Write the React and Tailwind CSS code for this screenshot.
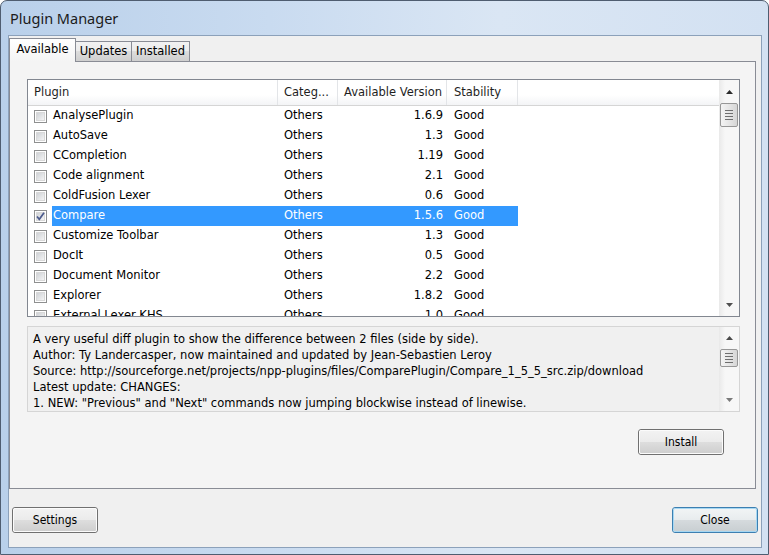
import React from "react";

const rows = [
  ["AnalysePlugin", "1.6.9"],
  ["AutoSave", "1.3"],
  ["CCompletion", "1.19"],
  ["Code alignment", "2.1"],
  ["ColdFusion Lexer", "0.6"],
  ["Compare", "1.5.6"],
  ["Customize Toolbar", "1.3"],
  ["DocIt", "0.5"],
  ["Document Monitor", "2.2"],
  ["Explorer", "1.8.2"],
  ["External Lexer KHS", "1.0"],
];

const FONT = { fontFamily: '"DejaVu Sans", Verdana, sans-serif' };

function Check({ checked }) {
  return (
    <div className="relative w-[13px] h-[13px] shrink-0 border border-[#8e8f8f] bg-white p-[1px]">
      <div className="w-full h-full border border-[#d8d8d8] bg-[linear-gradient(135deg,#cfd2d6,#f4f4f4)]" />
      {checked && (
        <svg className="absolute left-0 top-0" width="11" height="11" viewBox="0 0 11 11">
          <path d="M2 5.5 L4.3 8.3 L9 1.8" stroke="#4b5a8c" strokeWidth="1.7" fill="none" />
        </svg>
      )}
    </div>
  );
}

function Arrow({ up, color }) {
  return (
    <svg width="7" height="4" viewBox="0 0 7 4">
      {up ? <polygon points="3.5,0 7,4 0,4" fill={color} /> : <polygon points="0,0 7,0 3.5,4" fill={color} />}
    </svg>
  );
}

function Thumb({ h }) {
  return (
    <div
      className="mx-[1px] rounded-[2px] border border-[#979797] bg-[linear-gradient(to_right,#f4f4f4,#e6e6e6_50%,#d6d6d6)] flex flex-col items-center justify-center gap-[2px]"
      style={{ height: h }}
    >
      <div className="w-[8px] h-[1px] bg-[#6f6f6f]" />
      <div className="w-[8px] h-[1px] bg-[#6f6f6f]" />
      <div className="w-[8px] h-[1px] bg-[#6f6f6f]" />
      <div className="w-[8px] h-[1px] bg-[#6f6f6f]" />
    </div>
  );
}

function ScrollBar({ btn, thumbH, upColor, downColor }) {
  return (
    <div className="w-[20px] h-full shrink-0 flex flex-col bg-[linear-gradient(to_right,#e9e9e9,#f7f7f7_30%,#f7f7f7)]">
      <div className="flex items-center justify-center shrink-0" style={{ height: btn }}>
        <Arrow up color={upColor} />
      </div>
      <Thumb h={thumbH} />
      <div className="flex-1" />
      <div className="flex items-center justify-center shrink-0" style={{ height: btn }}>
        <Arrow color={downColor} />
      </div>
    </div>
  );
}

function Btn({ children, def }) {
  return (
    <div
      className={
        def
          ? "w-[86px] h-[26px] rounded-[3px] border border-[#3c7fb1] p-0"
          : "w-[86px] h-[26px] rounded-[3px] border border-[#707070] p-0"
      }
    >
      <div
        className={
          def
            ? "w-full h-full rounded-[2px] border border-[#a6d7f2] bg-[linear-gradient(#f1f4f5_0%,#e8ecee_48%,#d5dadd_52%,#c9cfd2_100%)] flex items-center justify-center"
            : "w-full h-full rounded-[2px] border border-[#fbfbfb] bg-[linear-gradient(#f2f2f2_0%,#ebebeb_48%,#dddddd_52%,#cfcfcf_100%)] flex items-center justify-center"
        }
      >
        <span
          className="text-[12px] text-black leading-none"
          style={{ fontFamily: '"DejaVu Sans Condensed", "Liberation Sans Narrow", "DejaVu Sans", sans-serif', fontStretch: "condensed" }}
        >
          {children}
        </span>
      </div>
    </div>
  );
}

export default function App() {
  return (
    <div className="w-[769px] h-[555px] bg-white">
      <div className="w-[769px] h-[555px] rounded-t-[7px] border border-[#4f5d70] bg-[linear-gradient(to_right,#b9d0ea,#c9dbf0_35%,#dae6f4_65%,#d3e1f2)] flex flex-col overflow-hidden">
        <div className="h-[34px] shrink-0 flex items-center pl-[9px] pt-[2px]">
          <span className="text-[14.5px] text-[#1b1b1b]" style={{ fontFamily: '"Noto Sans", "Open Sans", sans-serif' }}>
            Plugin Manager
          </span>
        </div>
        <div className="flex-1 flex pl-[7px] pr-[6px] pb-[6px] min-h-0">
          <div className="flex-1 border border-[#8ca1ba] bg-[#f0f0f0] flex flex-col" style={FONT}>
            {/* tabs */}
            <div className="h-[25px] shrink-0 flex items-end text-[11.5px] text-black">
              <div className="relative z-10 -mb-[1px] w-[67px] h-[24px] border-x border-t border-[#898c95] bg-[linear-gradient(#ffffff,#f4f4f4)] flex items-center justify-center pb-[1px]">
                Available
              </div>
              <div className="w-[56px] h-[20px] border-t border-r border-[#898c95] bg-[linear-gradient(#f2f2f2,#ebebeb_50%,#dddddd_50%,#cfcfcf)] flex items-center justify-center">
                Updates
              </div>
              <div className="w-[58px] h-[20px] border-t border-r border-[#898c95] bg-[linear-gradient(#f2f2f2,#ebebeb_50%,#dddddd_50%,#cfcfcf)] flex items-center justify-center">
                Installed
              </div>
            </div>
            {/* panel */}
            <div className="w-[747px] h-[428px] shrink-0 border border-[#898c95] bg-[#f4f4f4] pl-[17px] pt-[17px] flex flex-col">
              {/* list */}
              <div className="w-[713px] h-[238px] shrink-0 border border-[#828790] bg-white flex">
                <div className="flex-1 flex flex-col overflow-hidden text-[11.5px] text-black">
                  <div className="h-[26px] shrink-0 flex border-b border-[#d5d5d5] bg-[linear-gradient(#ffffff_0%,#ffffff_60%,#f3f4f6_100%)] text-[#1e1e1e]">
                    <div className="w-[250px] shrink-0 pl-[6px] flex items-center border-r border-[#e3e5e8]">Plugin</div>
                    <div className="w-[60px] shrink-0 pl-[6px] flex items-center border-r border-[#e3e5e8]">Categ...</div>
                    <div className="w-[109px] shrink-0 pl-[6px] flex items-center border-r border-[#e3e5e8]">Available Version</div>
                    <div className="w-[71px] shrink-0 pl-[7px] flex items-center border-r border-[#e3e5e8]">Stability</div>
                    <div className="flex-1" />
                  </div>
                  {rows.map(([name, ver], i) => {
                    const sel = i === 5;
                    return (
                      <div key={name} className="h-[20px] shrink-0 flex items-center">
                        <div className="w-[24px] shrink-0 pl-[6px] flex items-center">
                          <Check checked={sel} />
                        </div>
                        <div
                          className={
                            sel
                              ? "flex h-[20px] items-center bg-[#3399ff] text-white"
                              : "flex h-[20px] items-center"
                          }
                        >
                          <div className="w-[226px] shrink-0 pl-[1px] whitespace-nowrap">{name}</div>
                          <div className="w-[60px] shrink-0 pl-[6px]">Others</div>
                          <div className="w-[109px] shrink-0 pr-[4px] text-right">{ver}</div>
                          <div className="w-[71px] shrink-0 pl-[7px]">Good</div>
                        </div>
                      </div>
                    );
                  })}
                </div>
                <ScrollBar btn={23} thumbH={24} upColor="#2b2b2b" downColor="#505050" />
              </div>
              {/* description */}
              <div className="mt-[9px] w-[713px] h-[86px] shrink-0 border border-[#d5d5d5] bg-[#f0f0f0] flex">
                <div className="flex-1 pl-[5px] pt-[4px] text-[11.5px] leading-[16px] text-black whitespace-nowrap overflow-hidden">
                  <div>A very useful diff plugin to show the difference between 2 files (side by side).</div>
                  <div>Author: Ty Landercasper, now maintained and updated by Jean-Sebastien Leroy</div>
                  <div>Source: http://sourceforge.net/projects/npp-plugins/files/ComparePlugin/Compare_1_5_5_src.zip/download</div>
                  <div>Latest update: CHANGES:</div>
                  <div>1. NEW: "Previous" and "Next" commands now jumping blockwise instead of linewise.</div>
                </div>
                <ScrollBar btn={22} thumbH={18} upColor="#4a4a4a" downColor="#7a7a7a" />
              </div>
              <div className="mt-[17px] w-[713px] flex justify-end pr-[16px]">
                <Btn>Install</Btn>
              </div>
            </div>
            {/* bottom buttons */}
            <div className="mt-[18px] flex justify-between px-[3px]">
              <Btn>Settings</Btn>
              <Btn def>Close</Btn>
            </div>
          </div>
        </div>
      </div>
    </div>
  );
}
